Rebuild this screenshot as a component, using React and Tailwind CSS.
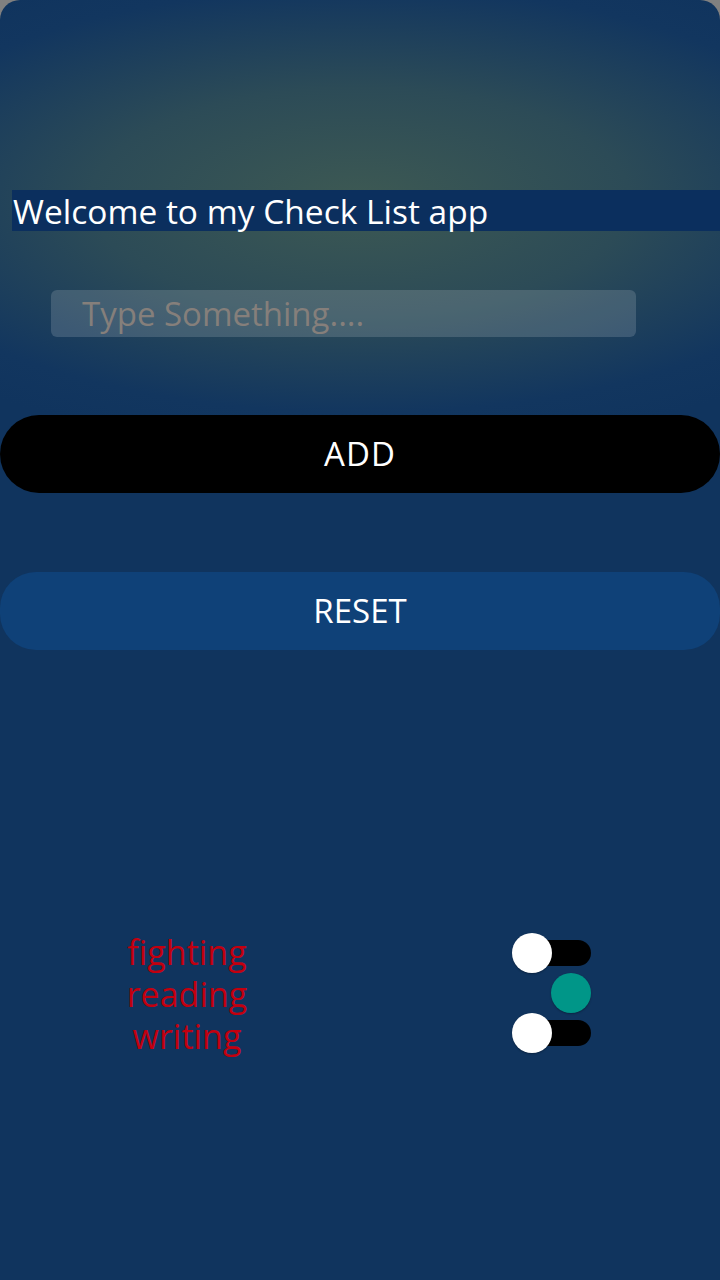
import { useState } from "react";

const items = [
  { id: 1, name: "fighting", done: false },
  { id: 2, name: "reading", done: true },
  { id: 3, name: "writing", done: false },
];

function Toggle({ on, onChange }) {
  return (
    <button
      type="button"
      onClick={onChange}
      className="relative block w-[79px] h-[40px]"
    >
      {!on && (
        <span className="absolute left-[20px] right-0 top-[7px] h-[26px] rounded-full bg-black" />
      )}
      <span
        className={
          on
            ? "absolute top-0 left-[39px] w-[40px] h-[40px] rounded-full bg-[#009688] shadow-[0_1px_2px_rgba(0,0,0,0.3)]"
            : "absolute top-0 left-0 w-[40px] h-[40px] rounded-full bg-white shadow-[0_1px_2px_rgba(0,0,0,0.3)]"
        }
      />
    </button>
  );
}

export default function App() {
  const [list, setList] = useState(items);
  const [text, setText] = useState("");

  const toggle = (id) =>
    setList(list.map((it) => (it.id === id ? { ...it, done: !it.done } : it)));

  return (
    <div className="min-h-[1280px] bg-[#808080] font-['Open_Sans',sans-serif]">
      <div className="min-h-[1280px] rounded-t-[20px] bg-[#0f335e] bg-[radial-gradient(ellipse_600px_250px_at_50%_200px,#3d5953_0%,#2c4b57_45%,#12365f_85%,#10345e_100%)] pt-[190px] pb-10">
        {/* title */}
        <div className="ml-[12px] h-[41px] bg-[#0b2f5e] text-white text-[33.5px] leading-[42px] pl-[1px]">
          Welcome to my Check List app
        </div>

        {/* input */}
        <input
          type="text"
          value={text}
          onChange={(e) => setText(e.target.value)}
          placeholder="Type Something...."
          className="block mt-[59px] ml-[51px] w-[585px] h-[47px] rounded-md bg-white/15 pl-[31px] text-[33px] text-white placeholder:text-[#857f7b] outline-none"
        />

        {/* buttons */}
        <button
          type="button"
          className="block w-full mt-[78px] h-[78px] rounded-full bg-black text-white text-[33px] tracking-[1px]"
        >
          ADD
        </button>
        <button
          type="button"
          onClick={() => setList(list.map((it) => ({ ...it, done: false })))}
          className="block w-full mt-[79px] h-[78px] rounded-[36px] bg-[#0f4178] text-white text-[33px]"
        >
          RESET
        </button>

        {/* list */}
        <div className="mt-[281px] flex items-start">
          <div className="ml-[107px] w-[160px] flex flex-col items-center text-[#c2000f] text-[34px] leading-[42px]">
            {list.map((it) => (
              <span key={it.id}>{it.name}</span>
            ))}
          </div>
          <div className="ml-[245px] mt-[2px] flex flex-col">
            {list.map((it) => (
              <Toggle key={it.id} on={it.done} onChange={() => toggle(it.id)} />
            ))}
          </div>
        </div>
      </div>
    </div>
  );
}
